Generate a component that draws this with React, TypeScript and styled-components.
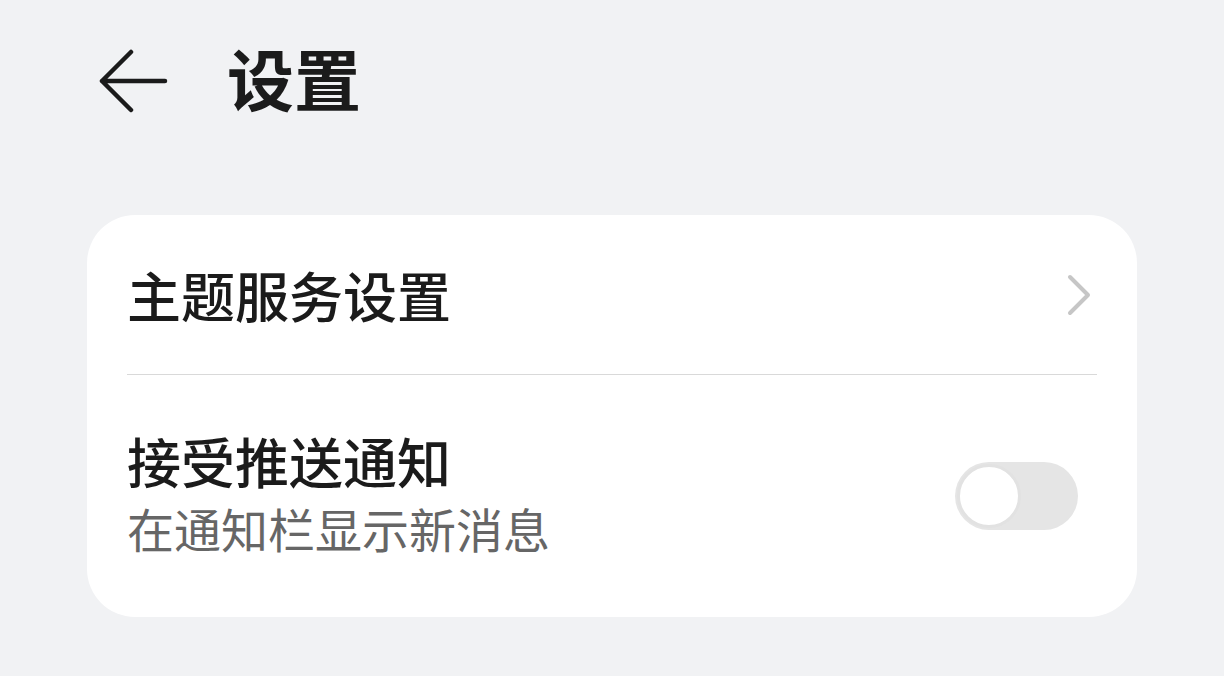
import React, { useState } from "react"
import styled, { createGlobalStyle } from 'styled-components'

const GlobalStyle = createGlobalStyle`
    html, body {
        margin: 0;
        padding: 0;
        background: #f1f2f4;
    }
    body {
        font-family: 'Noto Sans CJK SC', 'Noto Sans', sans-serif;
        color: #1b1b1b;
    }
`

const Page = styled.div`
    width: 1224px;
    height: 676px;
    box-sizing: border-box;
    padding: 49px 87px 0;
    background: #f1f2f4;
`

const Header = styled.div`
    display: flex;
    align-items: center;
    height: 64px;
    gap: 59px;
    padding-left: 11px;
`

const BackButton = styled.button`
    display: flex;
    width: 70px;
    height: 64px;
    padding: 0;
    border: none;
    background: none;
    cursor: pointer;
`

const Title = styled.h1`
    margin: 0;
    padding-bottom: 8px;
    font-size: 67px;
    line-height: 64px;
    font-weight: 700;
    color: #1b1b1b;
`

const Card = styled.div`
    margin-top: 102px;
    background: #fff;
    border-radius: 48px;
    padding: 0 40px;
`

const Row = styled.div<{ $height: number }>`
    display: flex;
    align-items: center;
    justify-content: space-between;
    box-sizing: border-box;
    height: ${p => p.$height}px;
`

const Divider = styled.div`
    height: 1px;
    background: #d9d9d9;
`

const TextBlock = styled.div`
    display: flex;
    flex-direction: column;
`

const RowTitle = styled.div`
    font-size: 54px;
    line-height: 64px;
    font-weight: 500;
    color: #1b1b1b;
`

const RowSub = styled.div`
    font-size: 47px;
    line-height: 70px;
    font-weight: 400;
    color: #666;
`

const Toggle = styled.div<{ $on: boolean }>`
    position: relative;
    width: 123px;
    height: 68px;
    margin-right: 19px;
    border-radius: 34px;
    background: ${p => p.$on ? '#0a59f7' : '#e5e5e5'};
    cursor: pointer;
`

const Knob = styled.div<{ $on: boolean }>`
    position: absolute;
    top: 2px;
    left: ${p => p.$on ? '57px' : '2px'};
    width: 64px;
    height: 64px;
    box-sizing: border-box;
    border-radius: 50%;
    border: 3px solid #e2e2e2;
    background: #fff;
`

const ChevronBox = styled.div`
    display: flex;
    margin-right: 3px;
`

const BackIcon = () => (
    <svg width="70" height="64" viewBox="0 0 70 64">
        <path d="M33 3 L4 32 L33 61 M4 32 H67" fill="none" stroke="#1b1b1b" strokeWidth="4.5" strokeLinecap="round" strokeLinejoin="round" />
    </svg>
)

const Chevron = () => (
    <svg width="28" height="44" viewBox="0 0 28 44">
        <path d="M4 4 L22 22 L4 40" fill="none" stroke="#c6c6c6" strokeWidth="4" strokeLinecap="round" strokeLinejoin="round" />
    </svg>
)

export default function App() {
    const [push, setPush] = useState(false)
    return (
        <Page>
            <GlobalStyle />
            <Header>
                <BackButton><BackIcon /></BackButton>
                <Title>设置</Title>
            </Header>
            <Card>
                <Row $height={159}>
                    <RowTitle>主题服务设置</RowTitle>
                    <ChevronBox><Chevron /></ChevronBox>
                </Row>
                <Divider />
                <Row $height={242}>
                    <TextBlock>
                        <RowTitle>接受推送通知</RowTitle>
                        <RowSub>在通知栏显示新消息</RowSub>
                    </TextBlock>
                    <Toggle $on={push} onClick={() => setPush(!push)}>
                        <Knob $on={push} />
                    </Toggle>
                </Row>
            </Card>
        </Page>
    )
}
